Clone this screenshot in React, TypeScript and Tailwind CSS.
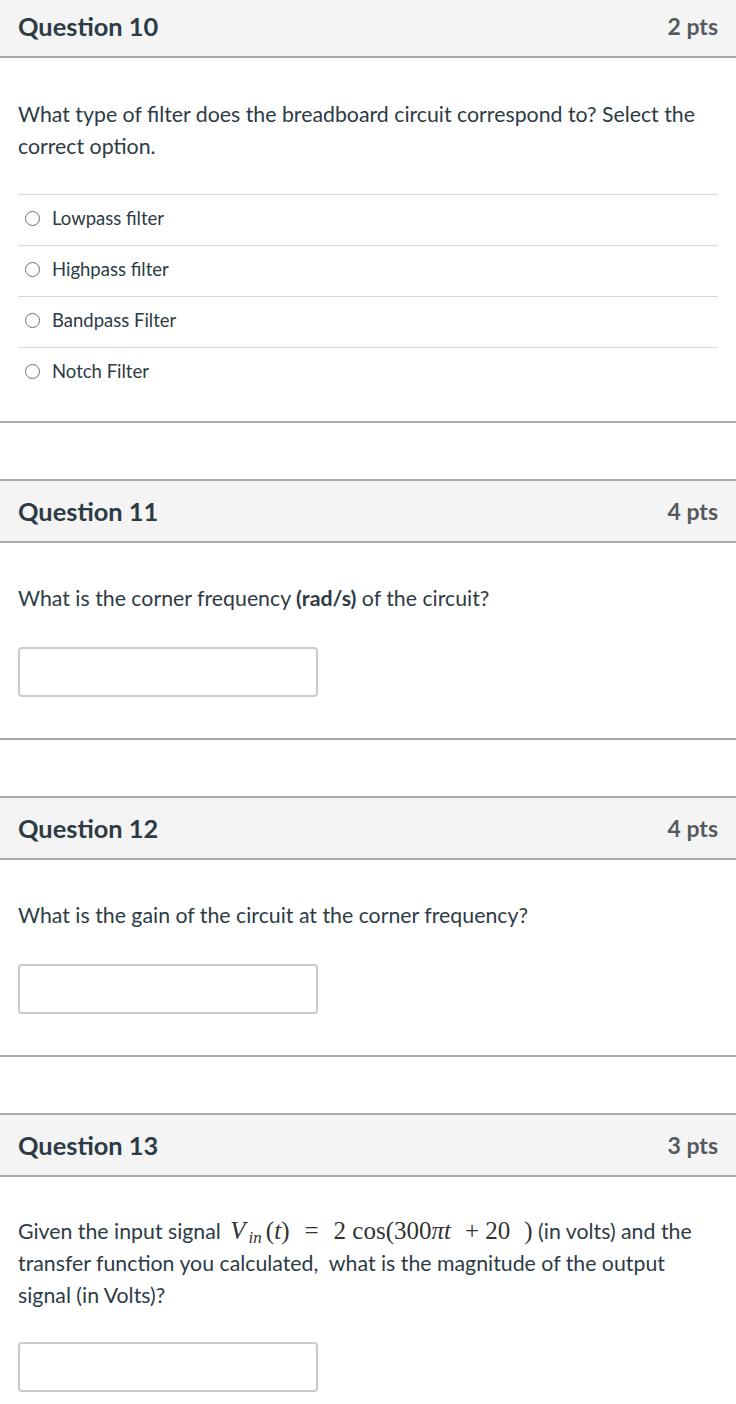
import React from "react";

const font = { fontFamily: "Lato, 'Noto Sans', sans-serif" };
const serif = { fontFamily: "'Liberation Serif', 'Times New Roman', serif" };

function Header({ title, pts }: { title: string; pts: string }) {
  return (
    <div className="flex h-[64px] items-center justify-between border-y-2 border-[#a9a9a9] bg-[#f4f4f4] px-[18px]">
      <div className="text-[25.4px] font-bold text-[#2d3b45]">{title}</div>
      <div className="text-[23px] font-bold text-[#555a5e]">{pts}</div>
    </div>
  );
}

function Input() {
  return <div className="h-[50px] w-[300px] rounded-[4px] border-2 border-[#cbcbcb] bg-white" />;
}

function Option({ label }: { label: string }) {
  return (
    <div className="flex h-[51px] items-center gap-[12px] border-t border-[#d9d9d9] pl-[7px] pb-[3px]">
      <span className="h-[15px] w-[15px] rounded-full border border-[#6f6f6f] bg-white" />
      <span className="text-[18.5px] text-[#2d3b45]">{label}</span>
    </div>
  );
}

export default function App() {
  return (
    <div className="min-h-[1404px] bg-white text-[#2d3b45]" style={font}>
      <div className="-mt-[6px]">
        {/* Question 10 */}
        <Header title="Question 10" pts="2 pts" />
        <div className="border-b-2 border-[#a9a9a9] px-[18px] pt-[40px] pb-[23px]">
          <p className="text-[21.3px] leading-[32px]">
            What type of filter does the breadboard circuit correspond to? Select the correct option.
          </p>
          <div className="mt-[32px]">
            <Option label="Lowpass filter" />
            <Option label="Highpass filter" />
            <Option label="Bandpass Filter" />
            <Option label="Notch Filter" />
          </div>
        </div>

        <div className="h-[56px]" />

        {/* Question 11 */}
        <Header title="Question 11" pts="4 pts" />
        <div className="border-b-2 border-[#a9a9a9] px-[18px] pt-[39px] pb-[41px]">
          <p className="text-[21.3px] leading-[32px]">
            What is the corner frequency <span className="font-bold">(rad/s)</span> of the circuit?
          </p>
          <div className="mt-[33px]">
            <Input />
          </div>
        </div>

        <div className="h-[56px]" />

        {/* Question 12 */}
        <Header title="Question 12" pts="4 pts" />
        <div className="border-b-2 border-[#a9a9a9] px-[18px] pt-[39px] pb-[41px]">
          <p className="text-[21.3px] leading-[32px]">What is the gain of the circuit at the corner frequency?</p>
          <div className="mt-[33px]">
            <Input />
          </div>
        </div>

        <div className="h-[56px]" />

        {/* Question 13 */}
        <Header title="Question 13" pts="3 pts" />
        <div className="px-[18px] pt-[38px] pb-[41px]">
          <p className="text-[21.3px] leading-[32px]">
            Given the input signal{" "}
            <span className="ml-[4px] text-[25px] leading-[16px] text-[#333]" style={serif}>
              <i>V</i>
              <sub className="ml-[3px] text-[17px] leading-[0]"><i>in</i></sub>
              <span className="ml-[4px]">(<i>t</i>)</span>
              <span className="mx-[15px]">=</span>
              <span>2 cos(300<i>πt</i></span>
              <span className="ml-[14px]">+ 20</span>
              <span className="ml-[14px]">)</span>
            </span>{" "}
            (in volts) and the transfer function you calculated,&nbsp; what is the magnitude of the output signal (in Volts)?
          </p>
          <div className="mt-[31px]">
            <Input />
          </div>
        </div>
      </div>
    </div>
  );
}
